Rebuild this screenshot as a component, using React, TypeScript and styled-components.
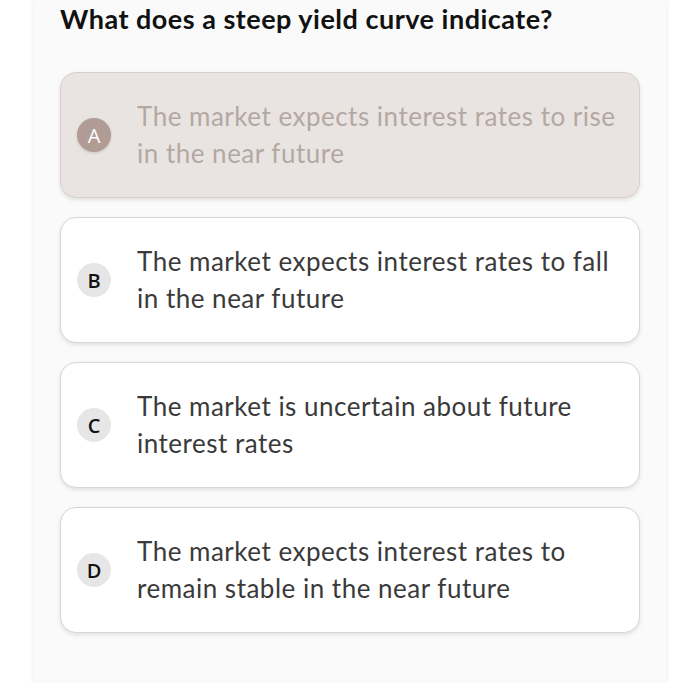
import styled, { createGlobalStyle } from "styled-components";

const GlobalStyle = createGlobalStyle`
  body {
    margin: 0;
    background: #ffffff;
    font-family: Lato, "Open Sans", sans-serif;
  }
`;

const Panel = styled.main`
  margin: 0 34px;
  min-height: 683px;
  box-sizing: border-box;
  background: #fafafa;
  box-shadow: 0 0 6px rgba(0, 0, 0, 0.09);
  padding: 0 26px;
`;

const Question = styled.h1`
  margin: 0;
  font-size: 27px;
  line-height: 38px;
  letter-spacing: 0.5px;
  font-weight: 700;
  color: #111111;
  margin-bottom: 34px;
`;

const Options = styled.div`
  display: flex;
  flex-direction: column;
  gap: 19px;
`;

const Option = styled.div<{ $selected?: boolean }>`
  display: flex;
  align-items: center;
  gap: 26px;
  box-sizing: border-box;
  min-height: 126px;
  padding: 25px 18px 25px 16px;
  border-radius: 16px;
  border: 1px solid ${(p) => (p.$selected ? "#d8cfcb" : "#d6d6d6")};
  background: ${(p) => (p.$selected ? "#e9e4e2" : "#ffffff")};
  box-shadow: 0 2px 4px rgba(0, 0, 0, 0.1);
`;

const Badge = styled.span<{ $selected?: boolean }>`
  flex: none;
  width: 34px;
  height: 34px;
  border-radius: 50%;
  display: flex;
  align-items: center;
  justify-content: center;
  font-family: "Open Sans", Lato, sans-serif;
  font-size: 20px;
  font-weight: ${(p) => (p.$selected ? 400 : 600)};
  background: ${(p) => (p.$selected ? "#b09c94" : "#e6e6e6")};
  color: ${(p) => (p.$selected ? "#ffffff" : "#111111")};
  box-shadow: ${(p) => (p.$selected ? "0 1px 3px rgba(0,0,0,0.15)" : "none")};
`;

const OptionText = styled.p<{ $selected?: boolean }>`
  margin: 0;
  font-size: 26px;
  line-height: 37px;
  letter-spacing: 0.5px;
  color: ${(p) => (p.$selected ? "#b4a8a3" : "#3a3a3a")};
`;

const options = [
  { key: "A", text: "The market expects interest rates to rise in the near future", selected: true },
  { key: "B", text: "The market expects interest rates to fall in the near future" },
  { key: "C", text: "The market is uncertain about future interest rates" },
  { key: "D", text: "The market expects interest rates to remain stable in the near future" },
];

const App = () => {
  return (
    <>
      <GlobalStyle />
      <Panel>
        <Question>What does a steep yield curve indicate?</Question>
        <Options>
          {options.map((o) => (
            <Option key={o.key} $selected={o.selected}>
              <Badge $selected={o.selected}>{o.key}</Badge>
              <OptionText $selected={o.selected}>{o.text}</OptionText>
            </Option>
          ))}
        </Options>
      </Panel>
    </>
  );
};

export default App;
